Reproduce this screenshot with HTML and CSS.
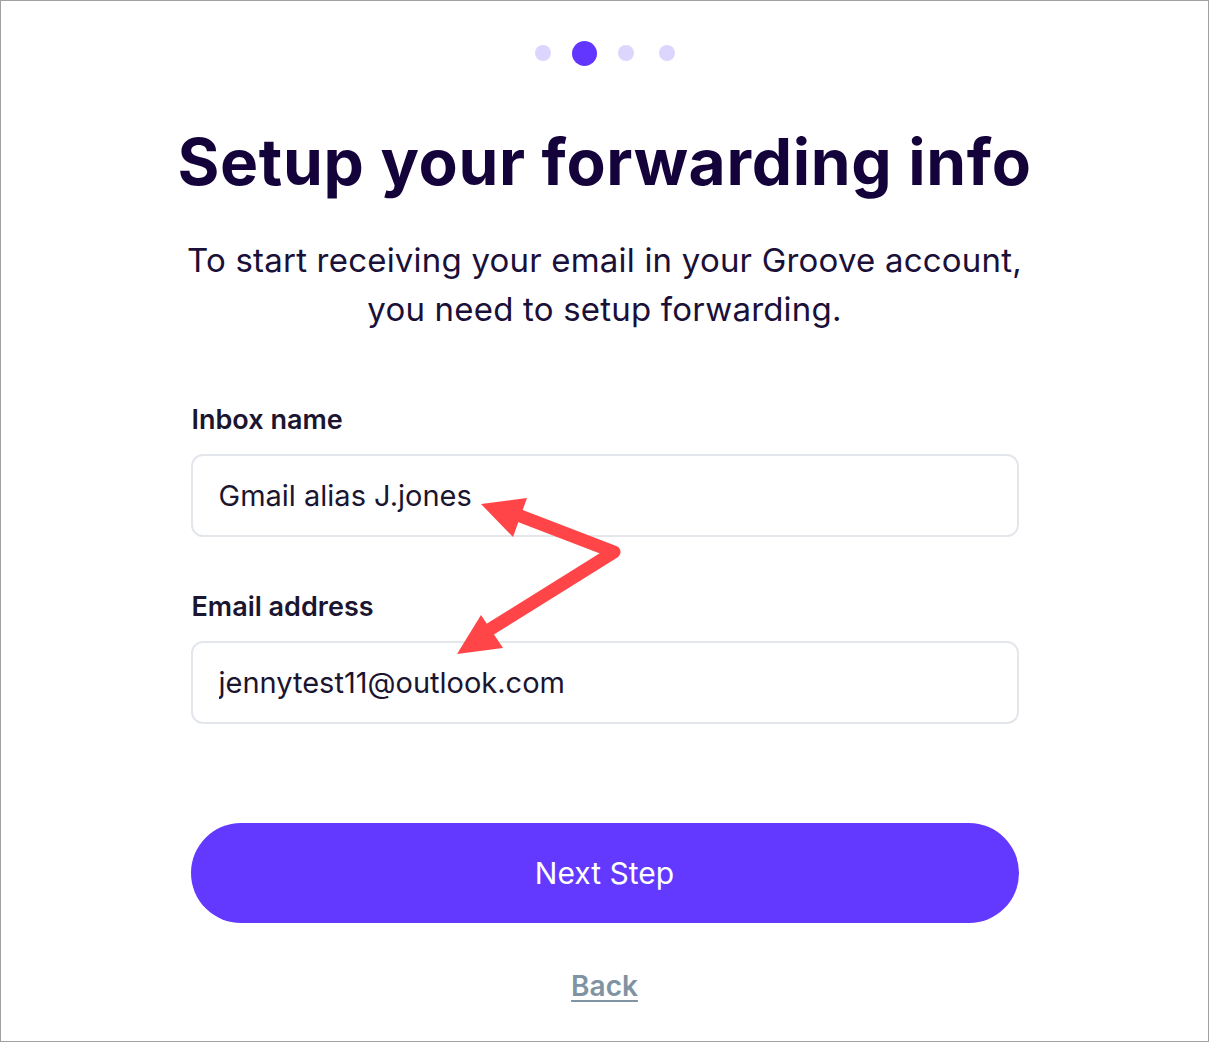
FILE: index.html
```html
<!DOCTYPE html>
<html lang="en">
  <head>
    <meta charset="UTF-8" />
    <meta name="viewport" content="width=device-width, initial-scale=1.0" />
    <title>Setup your forwarding info</title>
    <link rel="stylesheet" href="styles.css">
  </head>
  <body>
    <div class="frame">
      <div class="steps">
        <span class="dot"></span>
        <span class="dot active"></span>
        <span class="dot"></span>
        <span class="dot"></span>
      </div>

      <h1>Setup your forwarding info</h1>
      <p class="intro">To start receiving your email in your Groove account,<br>you need to setup forwarding.</p>

      <form class="form">
        <div class="field">
          <label for="inboxName">Inbox name</label>
          <input id="inboxName" type="text" value="Gmail alias J.jones">
        </div>
        <div class="field">
          <label for="emailAddress">Email address</label>
          <input id="emailAddress" type="text" value="jennytest11@outlook.com">
        </div>
        <button type="button" class="next-btn">Next Step</button>
        <div class="back-row"><a href="#">Back</a></div>
      </form>

      <!-- annotation arrows -->
      <svg class="arrows" width="1209" height="1042" viewBox="0 0 1209 1042">
        <polyline points="515,514 614,552 484,633" fill="none" stroke="#ff4548" stroke-width="13" stroke-linejoin="round" stroke-linecap="round" />
        <polygon points="481,504 527,498 513,537" fill="#ff4548" />
        <polygon points="457,654 481,615 503,648" fill="#ff4548" />
      </svg>
    </div>
  </body>
</html>
```

FILE: styles.css
```css
body {
  margin: 0;
  padding: 0;
  font-family: Inter, "Noto Sans", sans-serif;
  background-color: #ffffff;
  color: #14053a;
}

.frame {
  position: relative;
  box-sizing: border-box;
  width: 1209px;
  height: 1042px;
  border: 1px solid #a0a0a0;
  display: flex;
  flex-direction: column;
  align-items: center;
}

.steps {
  display: flex;
  align-items: center;
  gap: 25px;
  margin-top: 39px;
  height: 26px;
}

.dot {
  width: 16px;
  height: 16px;
  border-radius: 50%;
  background-color: #dcd6fe;
}

.dot.active {
  width: 25px;
  height: 25px;
  background-color: #6236ff;
  margin: 0 -4px;
}

h1 {
  margin: 60px 0 0;
  font-size: 64px;
  line-height: 72px;
  font-weight: 700;
  letter-spacing: 0.7px;
  color: #14033a;
}

.intro {
  margin: 38px 0 0;
  text-align: center;
  font-size: 33px;
  line-height: 49px;
  font-weight: 400;
  letter-spacing: 0.2px;
  color: #1a1038;
}

.form {
  width: 828px;
  margin-top: 71px;
}

.field {
  margin-bottom: 55px;
}

.field label {
  display: block;
  font-size: 27px;
  line-height: 30px;
  font-weight: 600;
  color: #1b1530;
  margin-left: 1px;
  margin-bottom: 19px;
}

.field input {
  box-sizing: border-box;
  width: 100%;
  height: 83px;
  padding: 0 26px;
  border: 2px solid #e3e6eb;
  border-radius: 12px;
  font-family: inherit;
  font-size: 29px;
  color: #1b1530;
  outline: none;
}

.next-btn {
  display: block;
  width: 100%;
  height: 100px;
  margin-top: 99px;
  border: none;
  border-radius: 50px;
  background-color: #6338ff;
  color: #ffffff;
  font-family: inherit;
  font-size: 30px;
  font-weight: 400;
  cursor: pointer;
}

.back-row {
  text-align: center;
  margin-top: 46px;
  line-height: 34px;
}

.back-row a {
  font-size: 28px;
  font-weight: 600;
  color: #8093a3;
  text-decoration: underline;
  text-underline-offset: 4px;
}

.arrows {
  position: absolute;
  left: -1px;
  top: -1px;
  pointer-events: none;
}
```
